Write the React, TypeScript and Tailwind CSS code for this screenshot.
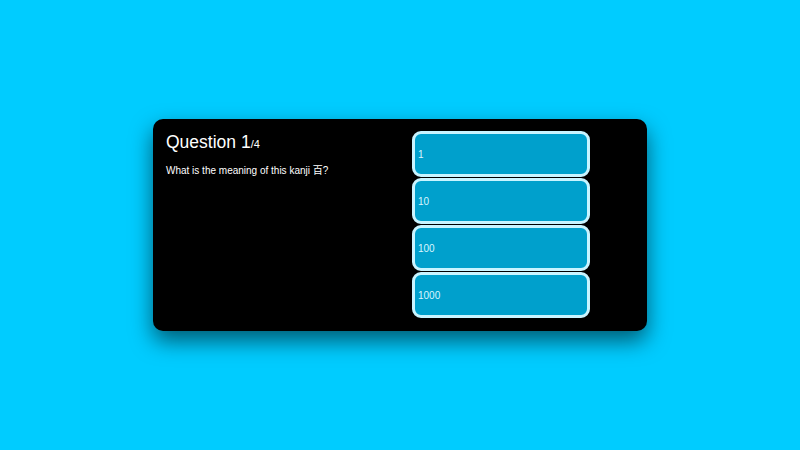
import React from "react";

const answers = ["1", "10", "100", "1000"];

export default function App() {
  return (
    <div
      className="w-[800px] h-[450px] bg-[#00ccff] flex items-center justify-center"
      style={{ fontFamily: '"Liberation Sans", "Noto Sans CJK JP", sans-serif' }}
    >
      <div className="w-[494px] h-[212px] bg-black rounded-[10px] shadow-[0_10px_22px_rgba(0,0,0,0.55)] flex pt-[12px] pl-[13px] pr-[13px]">
        <div className="w-[246px] flex-none text-white">
          <h1 className="text-[17.5px] leading-[22px] mt-[0px]">
            Question 1<span className="text-[11px]">/4</span>
          </h1>
          <p className="text-[10px] leading-[14px] mt-[9px]">
            What is the meaning of this kanji 百?
          </p>
        </div>
        <div className="w-[178px] flex flex-col gap-[1px]">
          {answers.map((a) => (
            <button
              key={a}
              className="h-[46px] w-full rounded-[9px] border-[3px] border-[#c9f4ff] bg-[#00a0cc] text-[#d9f6ff] text-[10px] text-left pl-[3px] pt-[1px] flex items-center"
            >
              {a}
            </button>
          ))}
        </div>
      </div>
    </div>
  );
}
